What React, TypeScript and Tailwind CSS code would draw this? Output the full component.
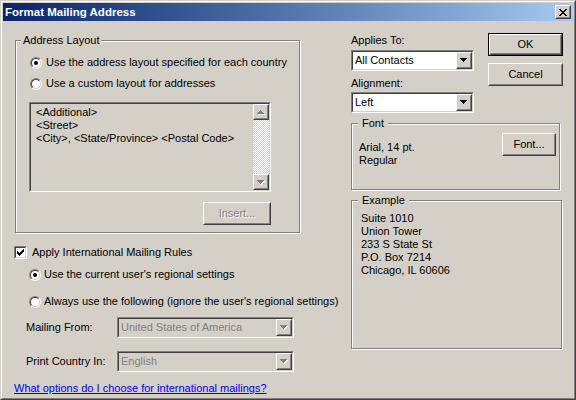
import React from 'react';

type Kids = { className?: string; inner?: string; children?: React.ReactNode };

const Raised = ({ className = '', inner = '', children }: Kids) => (
  <div className={`border border-t-white border-l-white border-r-[#404040] border-b-[#404040] bg-[#d4d0c8] ${className}`}>
    <div className={`h-full w-full border border-t-[#d4d0c8] border-l-[#d4d0c8] border-r-[#808080] border-b-[#808080] flex items-center justify-center ${inner}`}>
      {children}
    </div>
  </div>
);

const Sunken = ({ className = '', inner = '', children }: Kids) => (
  <div className={`border border-t-[#808080] border-l-[#808080] border-r-white border-b-white ${className}`}>
    <div className={`h-full w-full border border-t-[#404040] border-l-[#404040] border-r-[#d4d0c8] border-b-[#d4d0c8] ${inner}`}>
      {children}
    </div>
  </div>
);

const Arrow = ({ up = false, disabled = false }: { up?: boolean; disabled?: boolean }) => {
  const d = up
    ? 'M3 0h1v1H3zM2 1h3v1H2zM1 2h5v1H1zM0 3h7v1H0z'
    : 'M0 0h7v1H0zM1 1h5v1H1zM2 2h3v1H2zM3 3h1v1H3z';
  return (
    <svg width="8" height="5" viewBox="0 0 8 5" shapeRendering="crispEdges">
      {disabled && <path d={d} fill="#ffffff" transform="translate(1 1)" />}
      <path d={d} fill={disabled ? '#808080' : '#000000'} />
    </svg>
  );
};

const Radio = ({ checked = false }: { checked?: boolean }) => (
  <div className="w-[12px] h-[12px] shrink-0 rounded-full border border-t-[#808080] border-l-[#808080] border-r-white border-b-white">
    <div className="w-full h-full rounded-full border border-t-[#404040] border-l-[#404040] border-r-[#d4d0c8] border-b-[#d4d0c8] bg-white flex items-center justify-center">
      {checked && <div className="w-[4px] h-[4px] rounded-full bg-black" />}
    </div>
  </div>
);

const Checkbox = () => (
  <Sunken className="w-[13px] h-[13px] shrink-0" inner="bg-white flex items-center justify-center">
    <svg width="7" height="7" viewBox="0 0 7 7" shapeRendering="crispEdges">
      <path
        d="M6 0h1v1H6zM5 1h2v1H5zM0 2h1v1H0zM4 2h3v1H4zM0 3h2v1H0zM3 3h3v1H3zM0 4h5v1H0zM1 5h3v1H1zM2 6h1v1H2z"
        fill="#000"
      />
    </svg>
  </Sunken>
);

const Combo = ({ value, width, disabled = false }: { value: string; width: string; disabled?: boolean }) => (
  <Sunken
    className={`h-[21px] shrink-0 ${width}`}
    inner={`flex ${disabled ? 'bg-[#d4d0c8] text-[#808080]' : 'bg-white'}`}
  >
    <span className="flex-1 pl-[2px] leading-[17px] whitespace-nowrap overflow-hidden">{value}</span>
    <Raised className="w-[16px] h-[17px]">
      <Arrow disabled={disabled} />
    </Raised>
  </Sunken>
);

const Group = ({
  label,
  labelPos,
  className = '',
  children,
}: {
  label: string;
  labelPos: string;
  className?: string;
  children?: React.ReactNode;
}) => (
  <div className={`relative shrink-0 border border-[#808080] shadow-[inset_1px_1px_0_#fff,1px_1px_0_#fff] ${className}`}>
    <span className={`absolute -top-[7px] bg-[#d4d0c8] leading-[13px] whitespace-nowrap ${labelPos}`}>{label}</span>
    {children}
  </div>
);

const Option = ({ checked = false, text, className = '' }: { checked?: boolean; text: string; className?: string }) => (
  <div className={`flex items-center h-[13px] whitespace-nowrap ${className}`}>
    <Radio checked={checked} />
    <span>{text}</span>
  </div>
);

export default function App() {
  return (
    <div className="w-[576px] h-[400px] bg-[#d4d0c8] border border-t-[#d4d0c8] border-l-[#d4d0c8] border-r-[#404040] border-b-[#404040] font-['Liberation_Sans',Arial,sans-serif] text-[11px] leading-[13px] text-black select-none">
      <div className="w-full h-full border border-t-white border-l-white border-r-[#808080] border-b-[#808080] p-[1px] flex flex-col">
        {/* title bar */}
        <div className="h-[18px] shrink-0 flex items-center bg-gradient-to-r from-[#0a246a] to-[#a6caf0]">
          <span className="flex-1 pl-[2px] text-white font-bold text-[11.5px]">Format Mailing Address</span>
          <Raised className="w-[16px] h-[14px] mr-[2px]">
            <svg width="8" height="7" viewBox="0 0 8 7" shapeRendering="crispEdges">
              <path
                d="M0 0h2v1H0zM6 0h2v1H6zM1 1h2v1H1zM5 1h2v1H5zM2 2h4v1H2zM3 3h2v1H3zM2 4h4v1H2zM1 5h2v1H1zM5 5h2v1H5zM0 6h2v1H0zM6 6h2v1H6z"
                fill="#000"
              />
            </svg>
          </Raised>
        </div>

        <div className="flex pl-[11px]">
          {/* left column */}
          <div className="w-[286px] shrink-0 flex flex-col">
            <Group label="Address Layout" labelPos="left-[5px] px-[2px]" className="ml-[1px] mt-[19px] w-[285px] h-[193px]">
              <div className="flex flex-col pt-[15px] pl-[13px]">
                <Option checked text="Use the address layout specified for each country" className="ml-[1px] gap-[4px]" />
                <Option text="Use a custom layout for addresses" className="ml-[1px] mt-[8px] gap-[4px]" />
                <Sunken className="mt-[12px] w-[242px] h-[90px]" inner="flex bg-[#d4d0c8]">
                  <div className="flex-1 pl-[5px] pt-[2px] whitespace-nowrap">
                    <div>&lt;Additional&gt;</div>
                    <div>&lt;Street&gt;</div>
                    <div>&lt;City&gt;, &lt;State/Province&gt; &lt;Postal Code&gt;</div>
                  </div>
                  <div className="w-[16px] flex flex-col">
                    <Raised className="h-[16px] shrink-0">
                      <Arrow up disabled />
                    </Raised>
                    <div className="flex-1 [background-image:repeating-conic-gradient(#ffffff_0_25%,#d4d0c8_0_50%)] [background-size:2px_2px]" />
                    <Raised className="h-[16px] shrink-0">
                      <Arrow disabled />
                    </Raised>
                  </div>
                </Sunken>
                <div className="w-[242px] flex justify-end mt-[10px]">
                  <Raised className="w-[68px] h-[23px]" inner="text-[#808080] [text-shadow:1px_1px_0_#ffffff]">
                    Insert...
                  </Raised>
                </div>
              </div>
            </Group>

            <div className="mt-[13px] flex items-center gap-[5px] h-[13px] whitespace-nowrap">
              <Checkbox />
              <span>Apply International Mailing Rules</span>
            </div>
            <Option checked text="Use the current user's regional settings" className="ml-[15px] mt-[9px] gap-[3px]" />
            <Option
              text="Always use the following (ignore the user's regional settings)"
              className="ml-[15px] mt-[14px] gap-[3px]"
            />
            <div className="ml-[12px] mt-[9px] flex items-center h-[21px]">
              <span className="w-[91px] shrink-0">Mailing From:</span>
              <Combo value="United States of America" width="w-[177px]" disabled />
            </div>
            <div className="ml-[12px] mt-[13px] flex items-center h-[21px]">
              <span className="w-[91px] shrink-0">Print Country In:</span>
              <Combo value="English" width="w-[177px]" disabled />
            </div>
            <a href="#" className="mt-[10px] self-start whitespace-nowrap text-[#0000ff] underline">
              What options do I choose for international mailings?
            </a>
          </div>

          {/* right column */}
          <div className="ml-[51px] w-[212px] shrink-0 flex flex-col">
            <div className="mt-[12px] flex justify-between">
              <div className="w-[123px] flex flex-col">
                <span className="mt-[1px]">Applies To:</span>
                <div className="mt-[3px]">
                  <Combo value="All Contacts" width="w-[123px]" />
                </div>
                <span className="mt-[6px]">Alignment:</span>
                <div className="mt-[2px]">
                  <Combo value="Left" width="w-[123px]" />
                </div>
              </div>
              <div className="w-[75px] flex flex-col">
                <div className="h-[23px] border border-black flex">
                  <Raised className="flex-1">OK</Raised>
                </div>
                <Raised className="mt-[7px] h-[23px]">Cancel</Raised>
              </div>
            </div>

            <Group label="Font" labelPos="left-[6px] px-[4px]" className="mt-[10px] w-[209px] h-[67px]">
              <div className="flex justify-between items-start pl-[7px]">
                <div className="mt-[17px]">
                  <div>Arial, 14 pt.</div>
                  <div>Regular</div>
                </div>
                <Raised className="mt-[9px] mr-[3px] w-[54px] h-[23px]">Font...</Raised>
              </div>
            </Group>

            <Group label="Example" labelPos="left-[6px] px-[4px]" className="mt-[10px] w-[211px] h-[149px]">
              <div className="pl-[9px] pt-[11px]">
                <div>Suite 1010</div>
                <div>Union Tower</div>
                <div>233 S State St</div>
                <div>P.O. Box 7214</div>
                <div>Chicago, IL 60606</div>
              </div>
            </Group>
          </div>
        </div>
      </div>
    </div>
  );
}
